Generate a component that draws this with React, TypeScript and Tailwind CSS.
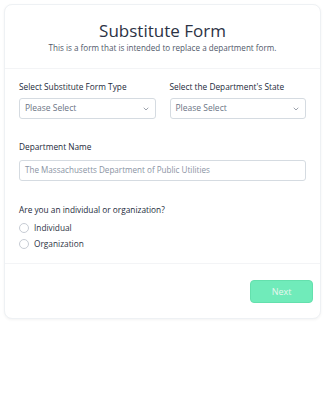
import { ChevronDown } from "lucide-react"

const font = { fontFamily: '"Open Sans", "Noto Sans", sans-serif' }

function SelectBox() {
  return (
    <div className="flex h-[21px] items-center justify-between rounded-[3px] border border-[#d5dbe1] bg-white pl-[5px] pr-[5px]">
      <span className="text-[8.5px] text-[#6b7484]">Please Select</span>
      <ChevronDown className="h-[8px] w-[8px] text-[#6b7484]" strokeWidth={2} />
    </div>
  )
}

function Radio({ label }: { label: string }) {
  return (
    <div className="flex h-[10px] items-center gap-[5px]">
      <span className="h-[10px] w-[10px] rounded-full border border-[#c7ccd4] bg-white" />
      <span className="text-[8.3px] font-medium text-[#2c3345]">{label}</span>
    </div>
  )
}

export default function App() {
  return (
    <div className="min-h-[400px] bg-white p-[4px]" style={font}>
      <div className="flex h-[315px] w-[317px] flex-col rounded-[8px] border border-[#eef1f4] bg-white shadow-[0_1px_3px_rgba(0,0,0,0.05)]">
        {/* Header */}
        <div className="flex h-[64px] flex-col items-center border-b border-[#f3f4f6] pt-[15px]">
          <h1 className="text-[17px] font-medium leading-[22px] text-[#2c3345]">Substitute Form</h1>
          <p className="text-[8.1px] text-[#4f5869]">This is a form that is intended to replace a department form.</p>
        </div>

        {/* Body */}
        <div className="flex flex-1 flex-col border-b border-[#f3f4f6] px-[14px] pt-[12px]">
          <div className="grid grid-cols-2 gap-[14px]">
            <div className="flex flex-col gap-[5px]">
              <label className="text-[8.3px] font-medium leading-[12px] text-[#232a3b]">Select Substitute Form Type</label>
              <SelectBox />
            </div>
            <div className="flex flex-col gap-[5px]">
              <label className="text-[8.3px] font-medium leading-[12px] text-[#232a3b]">Select the Department's State</label>
              <SelectBox />
            </div>
          </div>

          <div className="mt-[22px] flex flex-col gap-[7px]">
            <label className="text-[8.3px] font-medium leading-[12px] text-[#232a3b]">Department Name</label>
            <div className="flex h-[21px] items-center rounded-[3px] border border-[#d5dbe1] bg-white px-[5px] text-[8.1px] text-[#8a93a3]">
              The Massachusetts Department of Public Utilities
            </div>
          </div>

          <div className="mt-[23px] flex flex-col gap-[6px]">
            <label className="mb-[1px] text-[8.3px] font-medium leading-[12px] text-[#232a3b]">Are you an individual or organization?</label>
            <Radio label="Individual" />
            <Radio label="Organization" />
          </div>
        </div>

        {/* Footer */}
        <div className="flex h-[54px] items-start justify-end px-[7px] pt-[16px]">
          <button className="h-[23px] w-[63px] rounded-[4px] border border-[#64e0ad] bg-[#70ebba] text-[9px] text-[#e7f6ef]">
            Next
          </button>
        </div>
      </div>
    </div>
  )
}
